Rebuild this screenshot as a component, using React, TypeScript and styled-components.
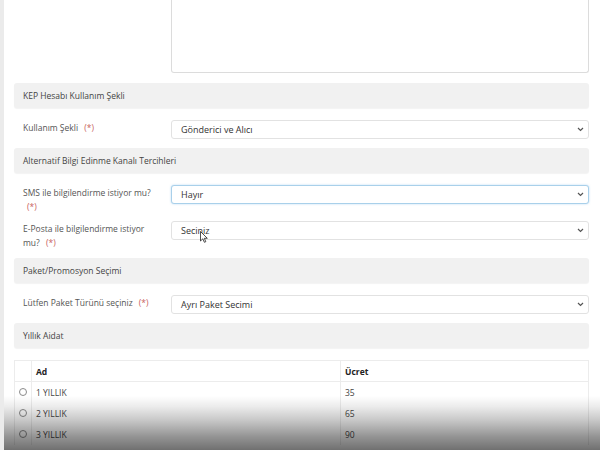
import styled, { createGlobalStyle } from 'styled-components';

const GlobalStyle = createGlobalStyle`
  html, body {
    margin: 0;
    padding: 0;
    background: #ffffff;
  }
  body {
    font-family: "Open Sans", "Liberation Sans", sans-serif;
    color: #444;
    overflow: hidden;
  }
`;

const Page = styled.div`
  position: relative;
  width: 600px;
  height: 450px;
  overflow: hidden;
  box-sizing: border-box;
  border-left: 4px solid #ebebeb;
  padding: 0 11px 0 10px;
`;

const Form = styled.div`
  display: flex;
  flex-direction: column;
`;

const Row = styled.div<{ $top?: number }>`
  display: grid;
  grid-template-columns: 157px 1fr;
  align-items: start;
  margin-top: ${(p) => p.$top ?? 12}px;
`;

const TextArea = styled.div`
  grid-column: 2;
  height: 72px;
  border: 1px solid #dcdcdc;
  border-top: none;
  border-radius: 0 0 3px 3px;
  background: #fff;
`;

const SectionHeader = styled.div<{ $top?: number }>`
  margin-top: ${(p) => p.$top ?? 9}px;
  height: 25px;
  display: flex;
  align-items: center;
  padding-left: 9px;
  background: #f1f1f1;
  border-radius: 3px;
  box-shadow: 0 1px 1px rgba(0, 0, 0, 0.05);
  font-size: 8.5px;
  color: #444;
`;

const Label = styled.div`
  padding: 1px 20px 0 9px;
  font-size: 8.5px;
  line-height: 14px;
  color: #555;
`;

const Required = styled.span`
  color: #c8625c;
  margin-left: 4px;
`;

const Select = styled.div<{ $focused?: boolean }>`
  height: 19px;
  box-sizing: border-box;
  display: flex;
  align-items: center;
  justify-content: space-between;
  padding: 0 4px 0 9px;
  border: 1px solid ${(p) => (p.$focused ? '#a9d0ea' : '#e2e2e2')};
  box-shadow: ${(p) => (p.$focused ? '0 0 2px rgba(102, 175, 233, 0.5)' : 'none')};
  border-radius: 3px;
  background: #fff;
  font-size: 9px;
  color: #333;
`;

const Chevron = () => (
  <svg width="7" height="5" viewBox="0 0 7 5">
    <path d="M1 1 L3.5 3.5 L6 1" fill="none" stroke="#555" strokeWidth="1.2" />
  </svg>
);

const Table = styled.div`
  margin-top: 12px;
  border: 1px solid #ececec;
  border-bottom: none;
  display: grid;
  grid-template-columns: 17px 309px 1fr;
  font-size: 8.5px;
  color: #444;
`;

const Cell = styled.div<{ $head?: boolean; $first?: boolean }>`
  height: 21px;
  display: flex;
  align-items: center;
  justify-content: ${(p) => (p.$first ? 'center' : 'flex-start')};
  padding-left: ${(p) => (p.$first ? 0 : 4)}px;
  font-weight: ${(p) => (p.$head ? 700 : 400)};
  color: ${(p) => (p.$head ? '#222' : '#444')};
  border-bottom: ${(p) => (p.$head ? '1px solid #ececec' : 'none')};
  border-right: 1px solid #ececec;
  box-sizing: border-box;
  &:nth-child(3n) {
    border-right: none;
  }
`;

const Radio = styled.span`
  width: 6px;
  height: 6px;
  border: 1px solid #8a8a8a;
  border-radius: 50%;
  background: #fff;
  margin-top: -2px;
`;

const Shade = styled.div`
  position: absolute;
  left: 0;
  right: 0;
  bottom: 0;
  height: 54px;
  pointer-events: none;
  background: linear-gradient(
    to bottom,
    rgba(0, 0, 0, 0) 0%,
    rgba(0, 0, 0, 0.08) 20%,
    rgba(0, 0, 0, 0.22) 45%,
    rgba(0, 0, 0, 0.42) 75%,
    rgba(0, 0, 0, 0.56) 100%
  );
`;

const Cursor = styled.svg`
  position: absolute;
  left: 196px;
  top: 231px;
`;

const plans = [
  { name: '1 YILLIK', price: '35' },
  { name: '2 YILLIK', price: '65' },
  { name: '3 YILLIK', price: '90' },
];

export default function App() {
  return (
    <>
      <GlobalStyle />
      <Page>
        <Form>
          <Row $top={0}>
            <TextArea />
          </Row>

          <SectionHeader $top={10}>KEP Hesabı Kullanım Şekli</SectionHeader>
          <Row>
            <Label>
              Kullanım Şekli <Required>(*)</Required>
            </Label>
            <Select>
              Gönderici ve Alıcı
              <Chevron />
            </Select>
          </Row>

          <SectionHeader>Alternatif Bilgi Edinme Kanalı Tercihleri</SectionHeader>
          <Row>
            <Label>
              SMS ile bilgilendirme istiyor mu? <Required>(*)</Required>
            </Label>
            <Select $focused>
              Hayır
              <Chevron />
            </Select>
          </Row>
          <Row $top={7}>
            <Label>
              E-Posta ile bilgilendirme istiyor mu? <Required>(*)</Required>
            </Label>
            <Select>
              Seciniz
              <Chevron />
            </Select>
          </Row>

          <SectionHeader $top={8}>Paket/Promosyon Seçimi</SectionHeader>
          <Row>
            <Label>
              Lütfen Paket Türünü seçiniz <Required>(*)</Required>
            </Label>
            <Select>
              Ayrı Paket Secimi
              <Chevron />
            </Select>
          </Row>

          <SectionHeader>Yıllık Aidat</SectionHeader>
          <Table>
            <Cell $head $first />
            <Cell $head>Ad</Cell>
            <Cell $head>Ücret</Cell>
            {plans.map((p) => (
              <>
                <Cell $first key={p.name + 'r'}>
                  <Radio />
                </Cell>
                <Cell key={p.name}>{p.name}</Cell>
                <Cell key={p.name + 'p'}>{p.price}</Cell>
              </>
            ))}
          </Table>
        </Form>
        <Cursor width="8" height="12" viewBox="0 0 8 12">
          <path d="M0.5 0.5 L0.5 10 L2.8 7.8 L4.4 11.3 L5.8 10.7 L4.3 7.3 L7.3 7.3 Z" fill="#fff" stroke="#222" strokeWidth="0.8" />
        </Cursor>
        <Shade />
      </Page>
    </>
  );
}
